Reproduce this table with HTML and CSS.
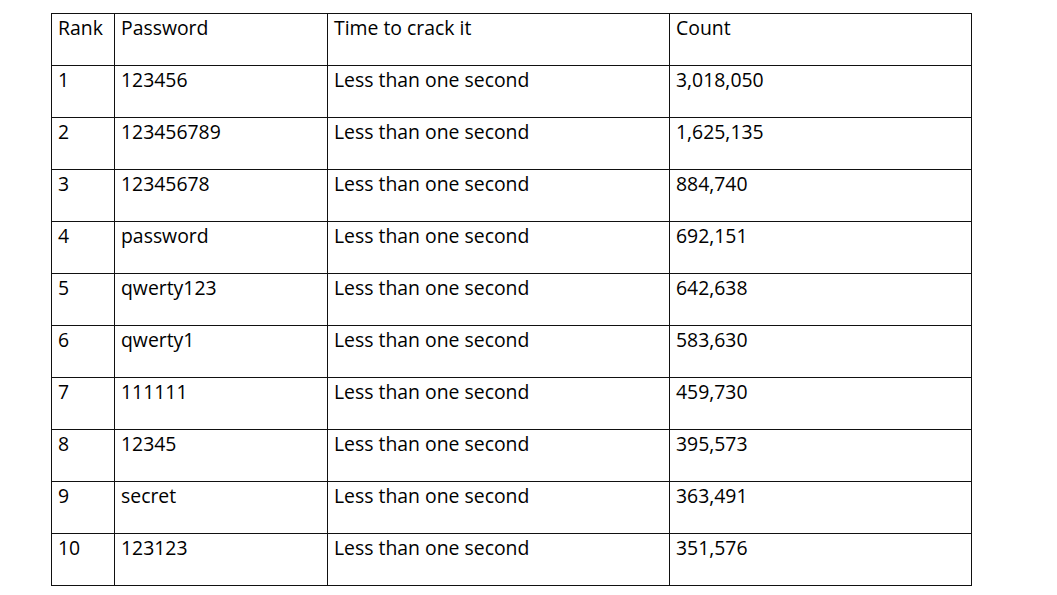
FILE: index.html
```html
<!DOCTYPE html>
<html>
<head>
<meta charset="utf-8">
<link rel="stylesheet" href="styles.css">
</head>
<body>
<div class="page">
<table class="grid">
<colgroup><col class="c1"><col class="c2"><col class="c3"><col class="c4"></colgroup>
<tr><td>Rank</td><td>Password</td><td>Time to crack it</td><td>Count</td></tr>
<tr><td>1</td><td>123456</td><td>Less than one second</td><td>3,018,050</td></tr>
<tr><td>2</td><td>123456789</td><td>Less than one second</td><td>1,625,135</td></tr>
<tr><td>3</td><td>12345678</td><td>Less than one second</td><td>884,740</td></tr>
<tr><td>4</td><td>password</td><td>Less than one second</td><td>692,151</td></tr>
<tr><td>5</td><td>qwerty123</td><td>Less than one second</td><td>642,638</td></tr>
<tr><td>6</td><td>qwerty1</td><td>Less than one second</td><td>583,630</td></tr>
<tr><td>7</td><td>111111</td><td>Less than one second</td><td>459,730</td></tr>
<tr><td>8</td><td>12345</td><td>Less than one second</td><td>395,573</td></tr>
<tr><td>9</td><td>secret</td><td>Less than one second</td><td>363,491</td></tr>
<tr><td>10</td><td>123123</td><td>Less than one second</td><td>351,576</td></tr>
</table>
</div>
</body>
</html>
```
FILE: styles.css
```css
html, body { margin: 0; padding: 0; background: #fff; }
.page { padding: 13px 0 0 51px; }
.grid {
  border-collapse: collapse;
  table-layout: fixed;
  width: 920px;
  font-family: "Open Sans", "Noto Sans", sans-serif;
  font-size: 19.4px;
  color: #000;
}
.c1 { width: 63px; }
.c2 { width: 213px; }
.c3 { width: 342px; }
.c4 { width: 302px; }
.grid td {
  border: 1px solid #111;
  height: 52px;
  padding: 1px 6px 0 6px;
  vertical-align: top;
  box-sizing: border-box;
  line-height: 26px;
  white-space: nowrap;
}
```
